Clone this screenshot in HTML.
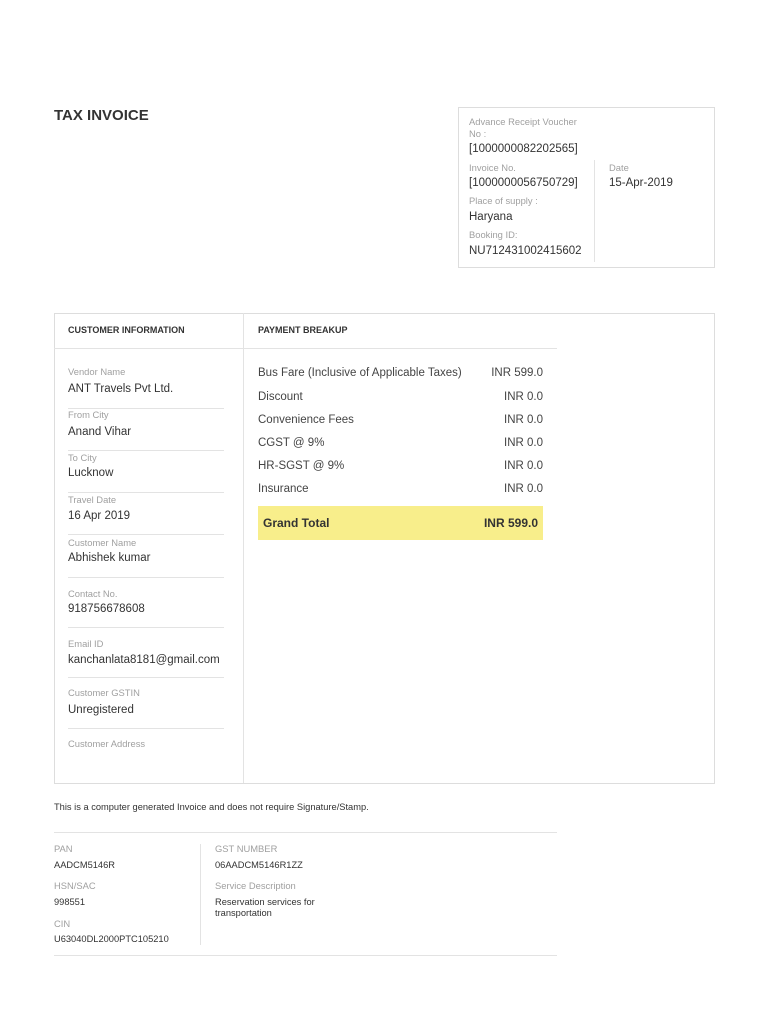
<!DOCTYPE html>
<html><head><meta charset="utf-8"><style>
body{margin:0;width:768px;height:1024px;background:#fff;font-family:"Liberation Sans",sans-serif;position:relative;overflow:hidden}
div{position:absolute;white-space:nowrap}
.l{font-size:9.4px;color:#a0a0a0}
.v{font-size:11.5px;color:#333}
.s{font-size:9.3px;color:#333}
.hr{height:1px;background:#e3e3e3}
.vr{width:1px;background:#e3e3e3}
.p{font-size:11.5px;color:#444}
.r{font-size:11.5px;color:#444;text-align:right;width:120px;left:423px}
</style></head><body>
<div style="left:54px;top:107px;font-size:15px;font-weight:bold;color:#333">TAX INVOICE</div>

<div style="left:458px;top:107px;width:255px;height:159px;border:1px solid #ddd"></div>
<div class="vr" style="left:594px;top:160px;height:102px"></div>
<div class="l" style="left:469px;top:116px;line-height:12px">Advance Receipt Voucher<br>No :</div>
<div class="v" style="left:469px;top:143px">[1000000082202565]</div>
<div class="l" style="left:469px;top:162px">Invoice No.</div>
<div class="v" style="left:469px;top:177px">[1000000056750729]</div>
<div class="l" style="left:469px;top:195px">Place of supply :</div>
<div class="v" style="left:469px;top:211px">Haryana</div>
<div class="l" style="left:469px;top:229px">Booking ID:</div>
<div class="v" style="left:469px;top:245px">NU712431002415602</div>
<div class="l" style="left:609px;top:162px">Date</div>
<div class="v" style="left:609px;top:177px">15-Apr-2019</div>

<div style="left:54px;top:313px;width:659px;height:469px;border:1px solid #ddd"></div>
<div class="hr" style="left:54px;top:348px;width:503px"></div>
<div class="vr" style="left:243px;top:313px;height:470px"></div>
<div style="left:68px;top:325px;font-size:9px;font-weight:bold;color:#333">CUSTOMER INFORMATION</div>
<div style="left:258px;top:325px;font-size:9px;font-weight:bold;color:#333">PAYMENT BREAKUP</div>

<div class="l" style="left:68px;top:366px">Vendor Name</div>
<div class="v" style="left:68px;top:383px">ANT Travels Pvt Ltd.</div>
<div class="hr" style="left:68px;top:408px;width:156px"></div>
<div class="l" style="left:68px;top:409px">From City</div>
<div class="v" style="left:68px;top:426px">Anand Vihar</div>
<div class="hr" style="left:68px;top:450px;width:156px"></div>
<div class="l" style="left:68px;top:452px">To City</div>
<div class="v" style="left:68px;top:467px">Lucknow</div>
<div class="hr" style="left:68px;top:492px;width:156px"></div>
<div class="l" style="left:68px;top:494px">Travel Date</div>
<div class="v" style="left:68px;top:510px">16 Apr 2019</div>
<div class="hr" style="left:68px;top:534px;width:156px"></div>
<div class="l" style="left:68px;top:537px">Customer Name</div>
<div class="v" style="left:68px;top:552px">Abhishek kumar</div>
<div class="hr" style="left:68px;top:577px;width:156px"></div>
<div class="l" style="left:68px;top:588px">Contact No.</div>
<div class="v" style="left:68px;top:603px">918756678608</div>
<div class="hr" style="left:68px;top:627px;width:156px"></div>
<div class="l" style="left:68px;top:638px">Email ID</div>
<div class="v" style="left:68px;top:654px">kanchanlata8181@gmail.com</div>
<div class="hr" style="left:68px;top:677px;width:156px"></div>
<div class="l" style="left:68px;top:687px">Customer GSTIN</div>
<div class="v" style="left:68px;top:704px">Unregistered</div>
<div class="hr" style="left:68px;top:728px;width:156px"></div>
<div class="l" style="left:68px;top:738px">Customer Address</div>

<div class="p" style="left:258px;top:367px">Bus Fare (Inclusive of Applicable Taxes)</div><div class="r" style="top:367px">INR 599.0</div>
<div class="p" style="left:258px;top:391px">Discount</div><div class="r" style="top:391px">INR 0.0</div>
<div class="p" style="left:258px;top:414px">Convenience Fees</div><div class="r" style="top:414px">INR 0.0</div>
<div class="p" style="left:258px;top:437px">CGST @ 9%</div><div class="r" style="top:437px">INR 0.0</div>
<div class="p" style="left:258px;top:460px">HR-SGST @ 9%</div><div class="r" style="top:460px">INR 0.0</div>
<div class="p" style="left:258px;top:483px">Insurance</div><div class="r" style="top:483px">INR 0.0</div>
<div style="left:258px;top:506px;width:285px;height:34px;background:#f8ee8b"></div>
<div style="left:263px;top:516px;font-size:12px;font-weight:bold;color:#333">Grand Total</div>
<div style="left:423px;top:516px;width:115px;text-align:right;font-size:12px;font-weight:bold;color:#333">INR 599.0</div>

<div class="s" style="left:54px;top:802px">This is a computer generated Invoice and does not require Signature/Stamp.</div>
<div class="hr" style="left:54px;top:832px;width:503px"></div>
<div class="vr" style="left:200px;top:844px;height:101px"></div>
<div class="l" style="left:54px;top:843px">PAN</div>
<div class="s" style="left:54px;top:860px">AADCM5146R</div>
<div class="l" style="left:54px;top:880px">HSN/SAC</div>
<div class="s" style="left:54px;top:897px">998551</div>
<div class="l" style="left:54px;top:918px">CIN</div>
<div class="s" style="left:54px;top:934px">U63040DL2000PTC105210</div>
<div class="l" style="left:215px;top:843px">GST NUMBER</div>
<div class="s" style="left:215px;top:860px">06AADCM5146R1ZZ</div>
<div class="l" style="left:215px;top:880px">Service Description</div>
<div class="s" style="left:215px;top:897px;line-height:11px">Reservation services for<br>transportation</div>
<div class="hr" style="left:54px;top:955px;width:503px"></div>
</body></html>
